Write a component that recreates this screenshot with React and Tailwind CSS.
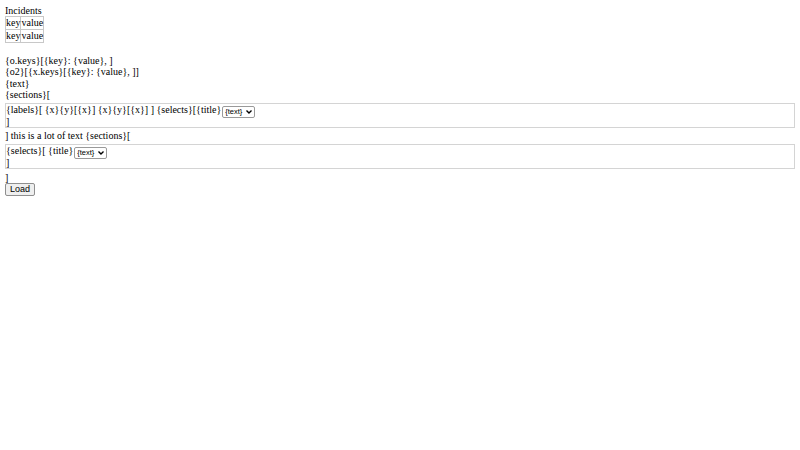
import React from "react";

const Box = ({ children }) => (
  <div className="my-[2.5px] border border-[#d4d4d4]">
    {children}
    <div>]</div>
  </div>
);

const Pick = () => (
  <span className="relative ml-[1px] inline-block align-[-1px]">
    <select className="block h-[12px] w-[33px] appearance-none rounded-[2px] border border-[#9a9a9a] bg-white pl-[2px] pr-[10px] font-['Liberation_Sans',sans-serif] text-[7.5px] leading-[10px]">
      <option>{"{text}"}</option>
    </select>
    <svg
      className="pointer-events-none absolute right-[3px] top-[4px]"
      width="6"
      height="4"
      viewBox="0 0 6 4"
    >
      <path d="M0.5 0.5 L3 3 L5.5 0.5" fill="none" stroke="#000" strokeWidth="1.4" />
    </svg>
  </span>
);

export default function App() {
  const rows = [1, 2];
  return (
    <div className="m-[5px] font-['Liberation_Serif',serif] text-[10px] leading-[11.4px] text-black">
      <div>Incidents</div>
      <table className="border-collapse border border-[#c8c8c8]">
        <tbody>
          {rows.map((r) => (
            <tr key={r}>
              <td className="border border-[#c8c8c8] p-0 leading-[12px]">key</td>
              <td className="border border-[#c8c8c8] p-0 leading-[12px]">value</td>
            </tr>
          ))}
        </tbody>
      </table>
      <div>&nbsp;</div>
      <div>{"{o.keys}[{key}: {value}, ]"}</div>
      <div>{"{o2}[{x.keys}[{key}: {value}, ]]"}</div>
      <div>{"{text}"}</div>
      <div>{"{sections}["}</div>
      <Box>
        <div className="h-[11.6px]">
          {"{labels}[ {x}{y}[{x}] {x}{y}[{x}] ] {selects}[{title}"}
          <Pick />
        </div>
      </Box>
      <div>{"] this is a lot of text {sections}["}</div>
      <Box>
        <div className="h-[11.6px]">
          {"{selects}[ {title}"}
          <Pick />
        </div>
      </Box>
      <div>]</div>
      <button className="rounded-[2px] border border-[#8f8f8f] bg-[#efefef] px-[4px] font-['Liberation_Sans',sans-serif] text-[9px] leading-[11px]">
        Load
      </button>
    </div>
  );
}
